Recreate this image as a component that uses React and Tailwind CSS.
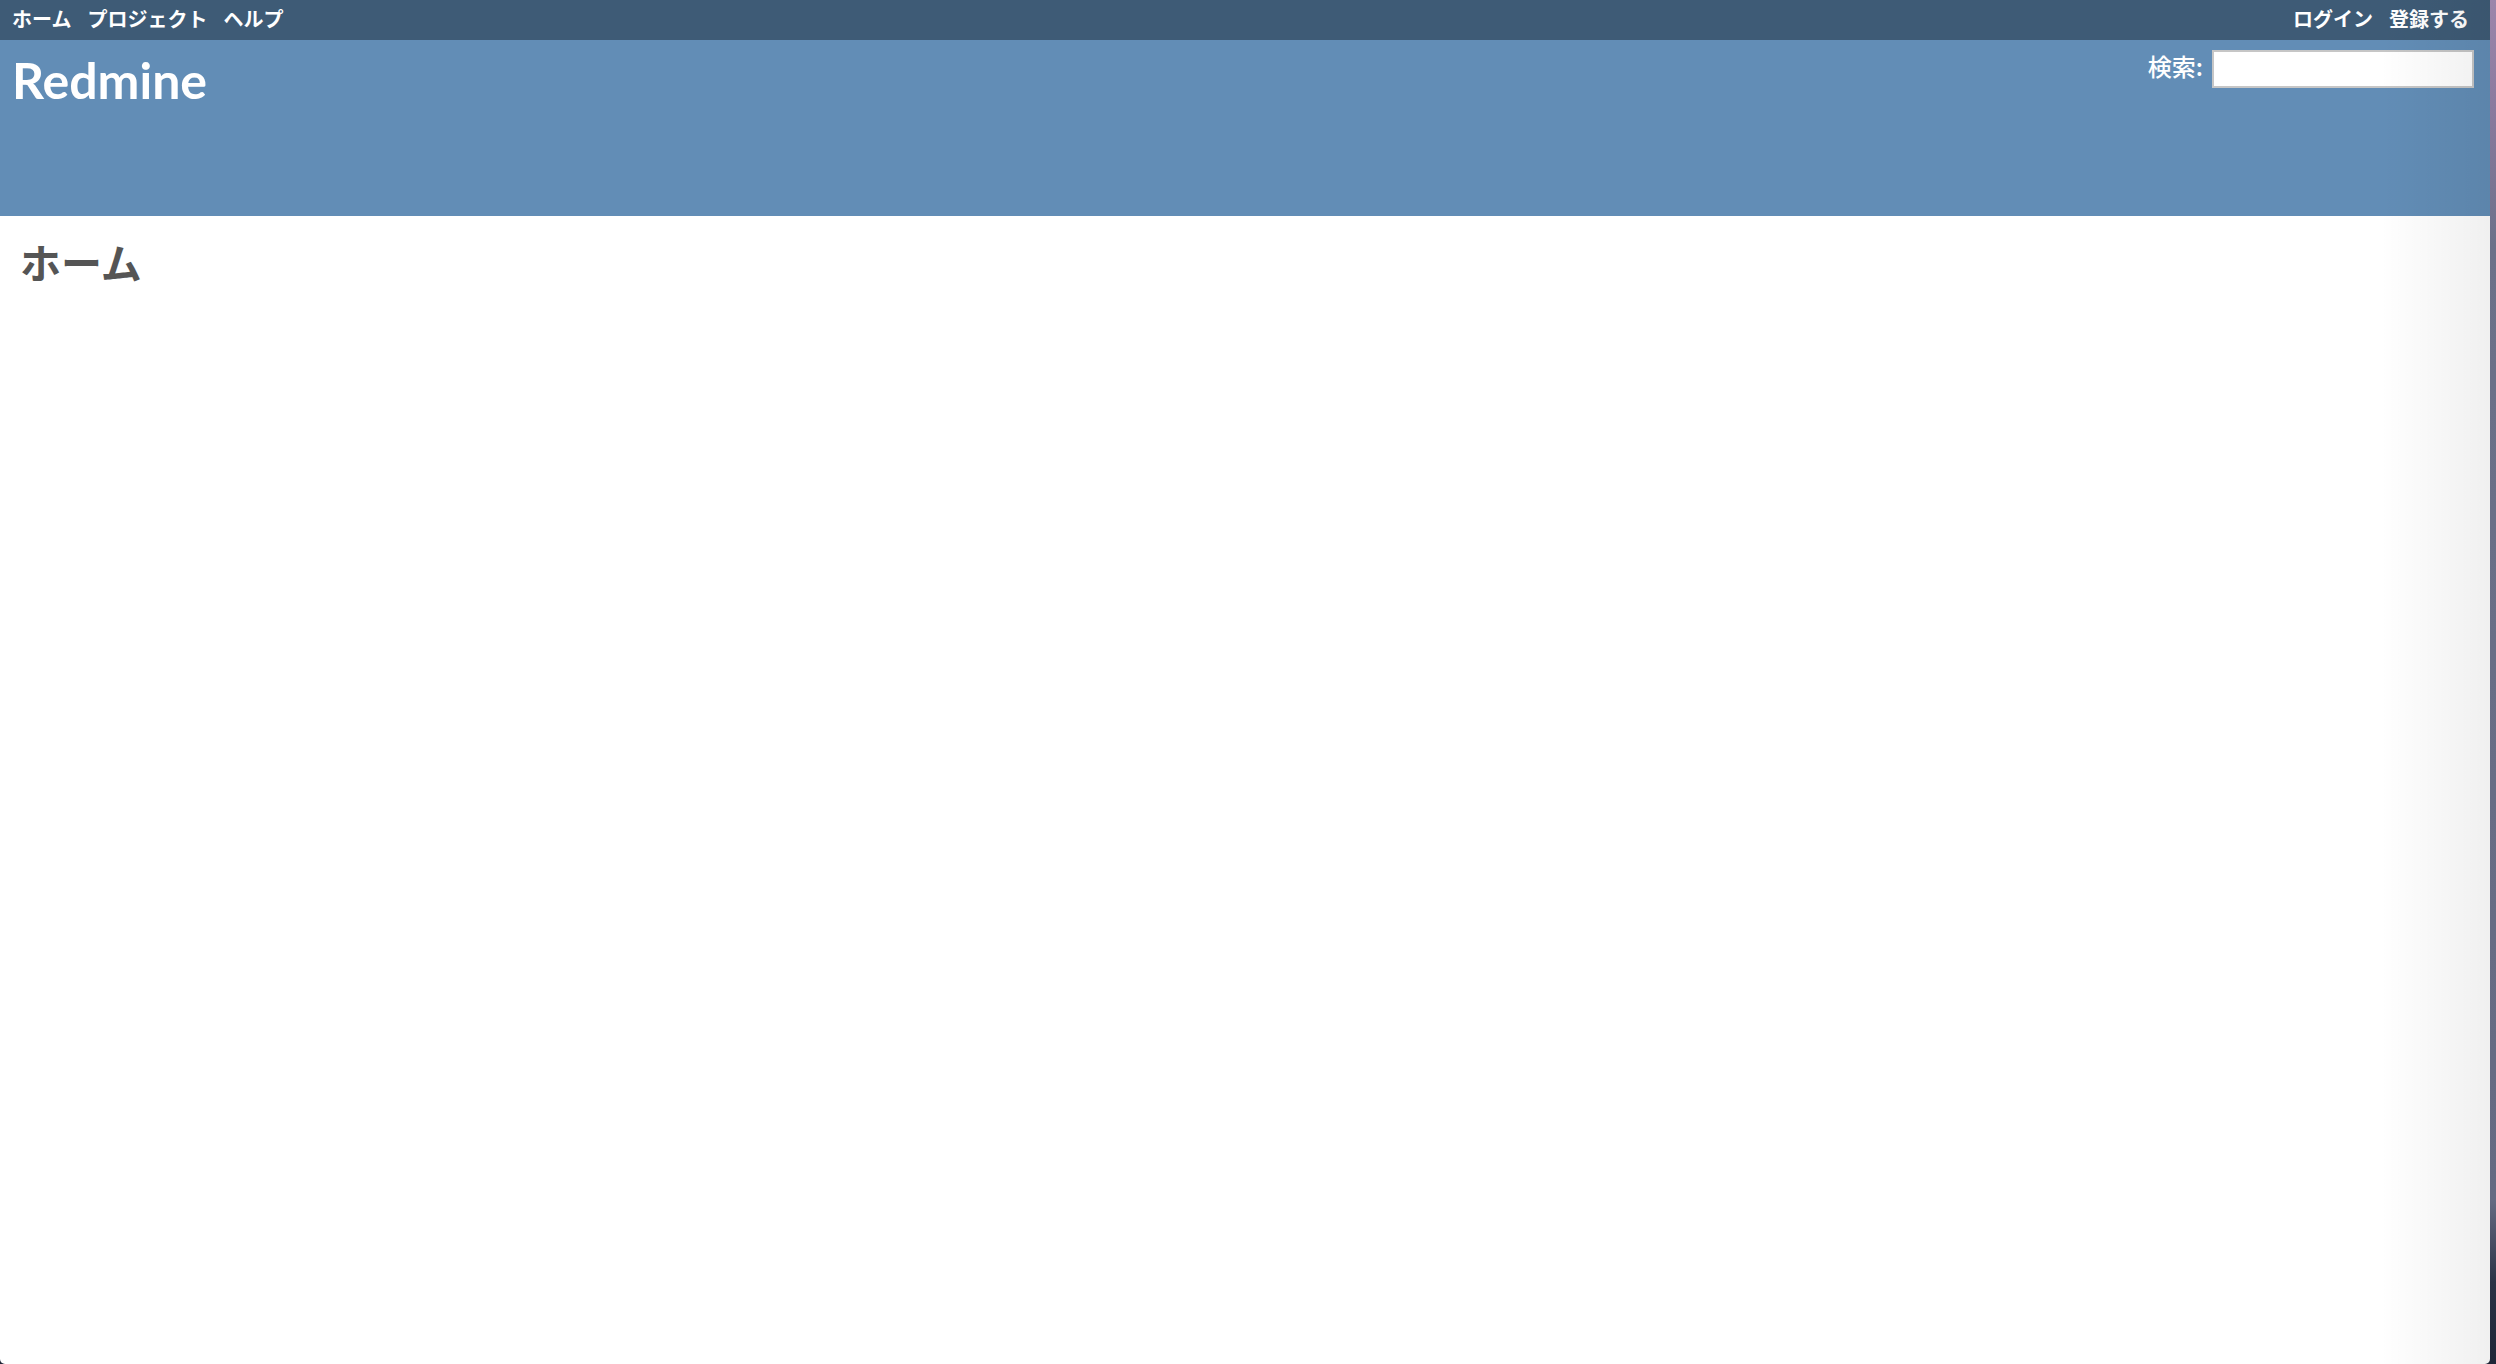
const jp = { fontFamily: '"Noto Sans CJK JP", "Noto Sans", sans-serif' };

const leftMenu = ['ホーム', 'プロジェクト', 'ヘルプ'];
const rightMenu = ['ログイン', '登録する'];

export default function App() {
  return (
    <div className="flex h-[1364px] w-[2496px] overflow-hidden bg-[#1f2637]">
      <div className="relative flex h-full w-[2490px] flex-col overflow-hidden rounded-b-[5px] bg-white">
        {/* top menu */}
        <div className="flex h-10 items-center justify-between bg-[#3e5b76] pl-3 pr-[21px] pb-0.5 text-[20px] font-bold leading-none text-white" style={jp}>
          <nav className="flex gap-4">
            {leftMenu.map((item) => (
              <a key={item} href="#">{item}</a>
            ))}
          </nav>
          <nav className="flex gap-4">
            {rightMenu.map((item) => (
              <a key={item} href="#">{item}</a>
            ))}
          </nav>
        </div>

        {/* header */}
        <div className="flex h-[176px] items-start justify-between bg-[#628db6] pl-[12px] pr-4">
          <h1 className="mt-[15px] text-[50px] font-bold leading-none text-white" style={{ fontFamily: 'Lato, "Open Sans", sans-serif' }}>
            Redmine
          </h1>
          <div className="mt-[10px] flex items-center gap-[9px]">
            <label className="mb-[6px] text-[24px] font-medium leading-none text-white" style={jp}>検索:</label>
            <input type="text" className="h-[38px] w-[262px] border-2 border-[#c6c6c6] bg-white outline-none" />
          </div>
        </div>

        {/* content */}
        <main className="flex-1 px-5 pt-[25px]">
          <h2 className="text-[41px] font-bold leading-none text-[#555]" style={jp}>ホーム</h2>
        </main>

        {/* window edge shadow */}
        <div className="pointer-events-none absolute inset-y-0 right-0 w-[110px] bg-gradient-to-r from-transparent to-black/[0.06]" />
      </div>
      <div className="h-full w-[6px] bg-[linear-gradient(to_bottom,#9c86ab_0%,#8a7a9e_8%,#6c7189_18%,#656a82_88%,#2b3346_94%,#1f2637_100%)]" />
    </div>
  );
}
